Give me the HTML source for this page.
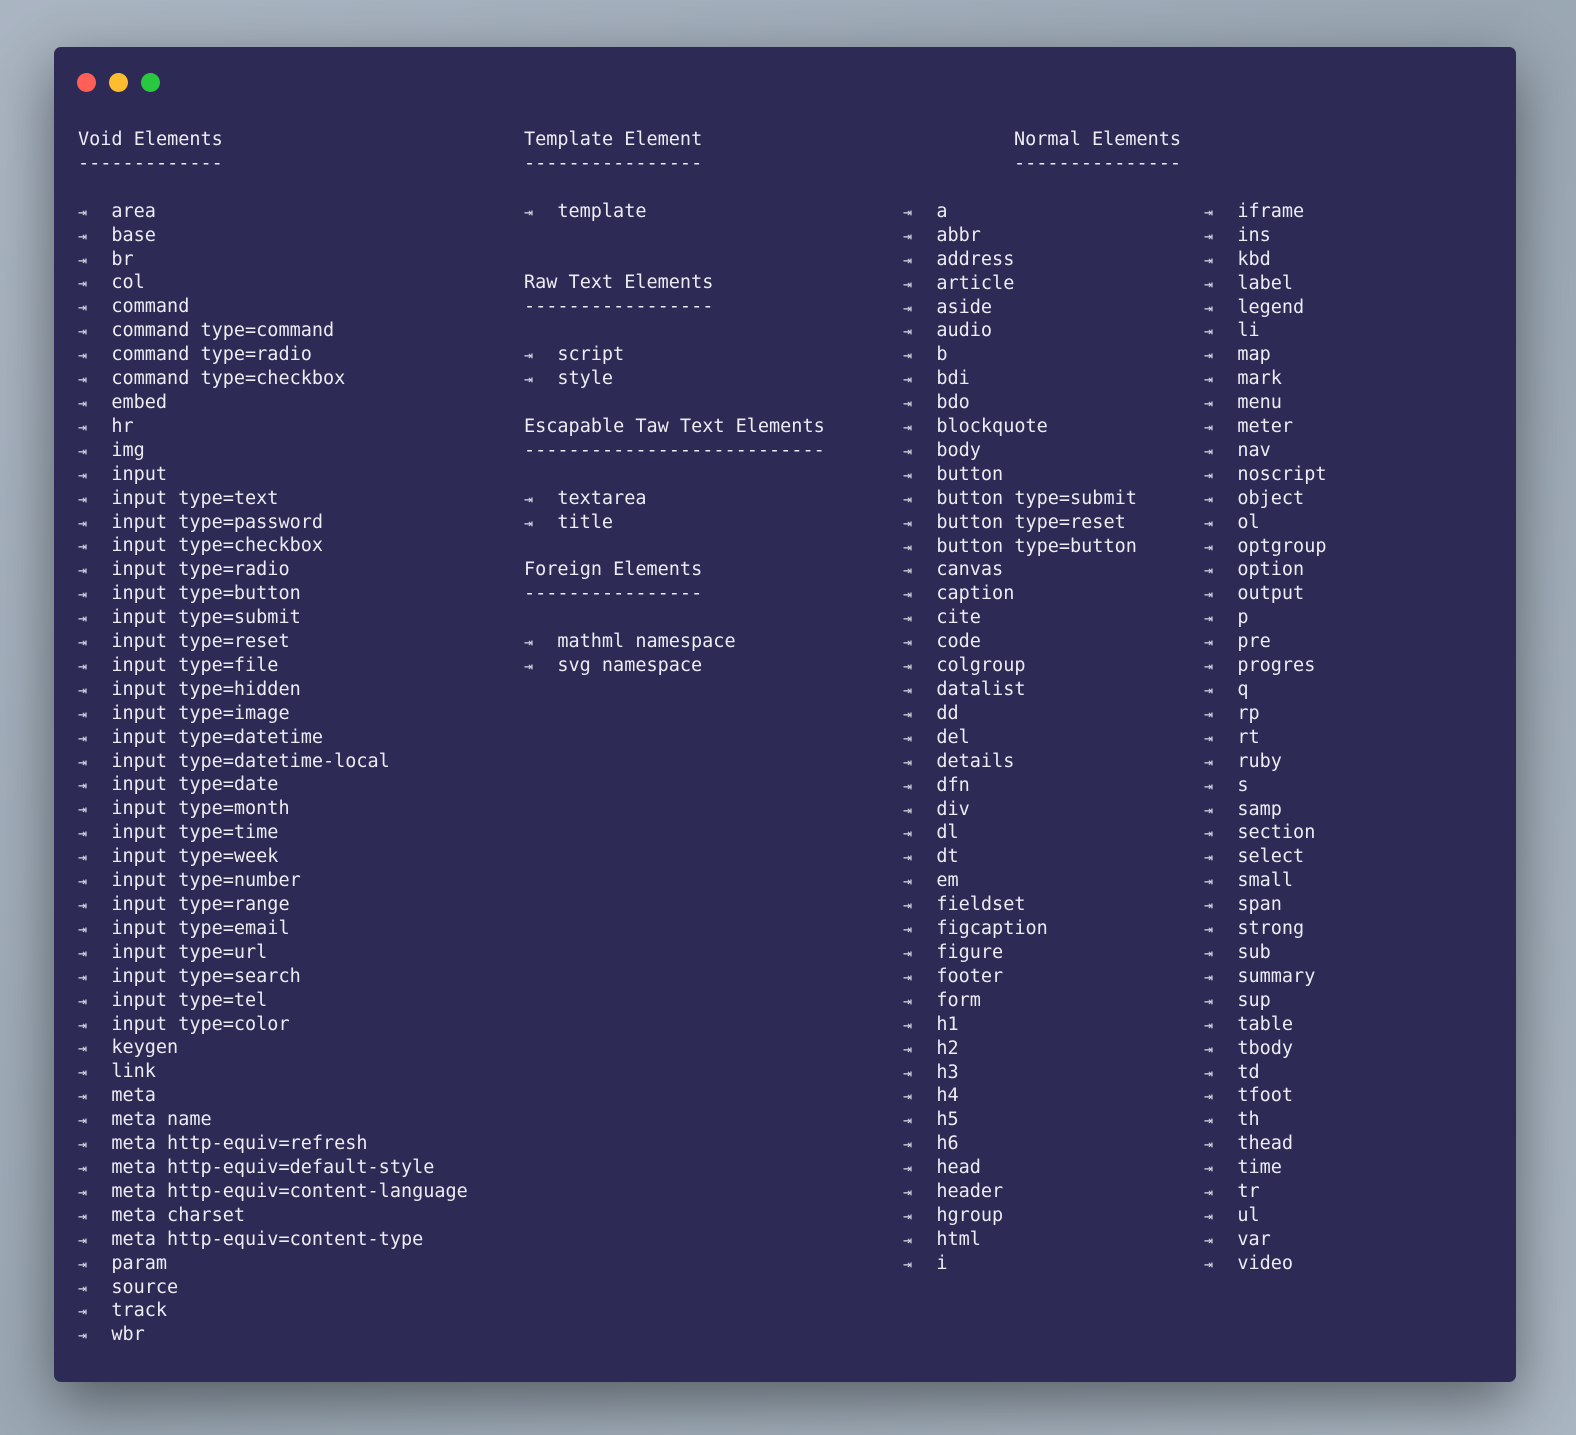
<!DOCTYPE html>
<html><head><meta charset="utf-8"><style>
html,body{margin:0;padding:0;width:1576px;height:1435px;overflow:hidden;background:linear-gradient(135deg,#aab5c2,#9aa7b3 50%,#a9b5c1);font-family:"DejaVu Sans Mono","Liberation Mono",monospace;position:relative;}
.win{position:absolute;left:54px;top:47px;width:1462px;height:1335px;background:#2d2a55;border-radius:7px;box-shadow:0 20px 60px rgba(0,0,0,.45);}
.dot{position:absolute;top:73px;width:19px;height:19px;border-radius:50%;}
pre{position:absolute;margin:0;top:128px;font-family:"DejaVu Sans Mono","Liberation Mono",monospace;font-size:18.5px;line-height:23.9px;height:auto;color:#ececf2;}
i{font-style:normal;font-size:15px;line-height:0;color:#d8d8e4;display:inline-block;width:11.1px;vertical-align:baseline;}
</style></head><body>
<div class="win"></div>
<div class="dot" style="left:77px;background:#fe5f57"></div>
<div class="dot" style="left:109px;background:#febc2e"></div>
<div class="dot" style="left:141px;background:#28c840"></div>
<pre style="left:78px">Void Elements
-------------

<i>⇥</i>  area
<i>⇥</i>  base
<i>⇥</i>  br
<i>⇥</i>  col
<i>⇥</i>  command
<i>⇥</i>  command type=command
<i>⇥</i>  command type=radio
<i>⇥</i>  command type=checkbox
<i>⇥</i>  embed
<i>⇥</i>  hr
<i>⇥</i>  img
<i>⇥</i>  input
<i>⇥</i>  input type=text
<i>⇥</i>  input type=password
<i>⇥</i>  input type=checkbox
<i>⇥</i>  input type=radio
<i>⇥</i>  input type=button
<i>⇥</i>  input type=submit
<i>⇥</i>  input type=reset
<i>⇥</i>  input type=file
<i>⇥</i>  input type=hidden
<i>⇥</i>  input type=image
<i>⇥</i>  input type=datetime
<i>⇥</i>  input type=datetime-local
<i>⇥</i>  input type=date
<i>⇥</i>  input type=month
<i>⇥</i>  input type=time
<i>⇥</i>  input type=week
<i>⇥</i>  input type=number
<i>⇥</i>  input type=range
<i>⇥</i>  input type=email
<i>⇥</i>  input type=url
<i>⇥</i>  input type=search
<i>⇥</i>  input type=tel
<i>⇥</i>  input type=color
<i>⇥</i>  keygen
<i>⇥</i>  link
<i>⇥</i>  meta
<i>⇥</i>  meta name
<i>⇥</i>  meta http-equiv=refresh
<i>⇥</i>  meta http-equiv=default-style
<i>⇥</i>  meta http-equiv=content-language
<i>⇥</i>  meta charset
<i>⇥</i>  meta http-equiv=content-type
<i>⇥</i>  param
<i>⇥</i>  source
<i>⇥</i>  track
<i>⇥</i>  wbr</pre>
<pre style="left:524px">Template Element
----------------

<i>⇥</i>  template


Raw Text Elements
-----------------

<i>⇥</i>  script
<i>⇥</i>  style

Escapable Taw Text Elements
---------------------------

<i>⇥</i>  textarea
<i>⇥</i>  title

Foreign Elements
----------------

<i>⇥</i>  mathml namespace
<i>⇥</i>  svg namespace</pre>
<pre style="left:1014px">Normal Elements
---------------</pre>
<pre style="left:903px;top:199.9px">
<i>⇥</i>  a
<i>⇥</i>  abbr
<i>⇥</i>  address
<i>⇥</i>  article
<i>⇥</i>  aside
<i>⇥</i>  audio
<i>⇥</i>  b
<i>⇥</i>  bdi
<i>⇥</i>  bdo
<i>⇥</i>  blockquote
<i>⇥</i>  body
<i>⇥</i>  button
<i>⇥</i>  button type=submit
<i>⇥</i>  button type=reset
<i>⇥</i>  button type=button
<i>⇥</i>  canvas
<i>⇥</i>  caption
<i>⇥</i>  cite
<i>⇥</i>  code
<i>⇥</i>  colgroup
<i>⇥</i>  datalist
<i>⇥</i>  dd
<i>⇥</i>  del
<i>⇥</i>  details
<i>⇥</i>  dfn
<i>⇥</i>  div
<i>⇥</i>  dl
<i>⇥</i>  dt
<i>⇥</i>  em
<i>⇥</i>  fieldset
<i>⇥</i>  figcaption
<i>⇥</i>  figure
<i>⇥</i>  footer
<i>⇥</i>  form
<i>⇥</i>  h1
<i>⇥</i>  h2
<i>⇥</i>  h3
<i>⇥</i>  h4
<i>⇥</i>  h5
<i>⇥</i>  h6
<i>⇥</i>  head
<i>⇥</i>  header
<i>⇥</i>  hgroup
<i>⇥</i>  html
<i>⇥</i>  i</pre>
<pre style="left:1204px;top:199.9px">
<i>⇥</i>  iframe
<i>⇥</i>  ins
<i>⇥</i>  kbd
<i>⇥</i>  label
<i>⇥</i>  legend
<i>⇥</i>  li
<i>⇥</i>  map
<i>⇥</i>  mark
<i>⇥</i>  menu
<i>⇥</i>  meter
<i>⇥</i>  nav
<i>⇥</i>  noscript
<i>⇥</i>  object
<i>⇥</i>  ol
<i>⇥</i>  optgroup
<i>⇥</i>  option
<i>⇥</i>  output
<i>⇥</i>  p
<i>⇥</i>  pre
<i>⇥</i>  progres
<i>⇥</i>  q
<i>⇥</i>  rp
<i>⇥</i>  rt
<i>⇥</i>  ruby
<i>⇥</i>  s
<i>⇥</i>  samp
<i>⇥</i>  section
<i>⇥</i>  select
<i>⇥</i>  small
<i>⇥</i>  span
<i>⇥</i>  strong
<i>⇥</i>  sub
<i>⇥</i>  summary
<i>⇥</i>  sup
<i>⇥</i>  table
<i>⇥</i>  tbody
<i>⇥</i>  td
<i>⇥</i>  tfoot
<i>⇥</i>  th
<i>⇥</i>  thead
<i>⇥</i>  time
<i>⇥</i>  tr
<i>⇥</i>  ul
<i>⇥</i>  var
<i>⇥</i>  video</pre>
</body></html>
